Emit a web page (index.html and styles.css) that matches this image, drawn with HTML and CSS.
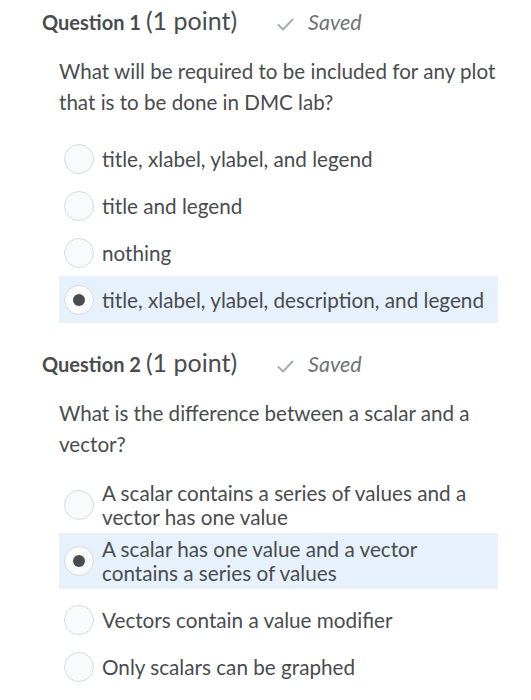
FILE: index.html
```html
<!DOCTYPE html>
<html>
<head>
<meta charset="utf-8">
<link rel="stylesheet" href="styles.css">
</head>
<body>
<div class="quiz">
  <section class="question q1">
    <h2 class="q-head">
      <span class="q-num">Question 1</span>
      <span class="q-pts">(1 point)</span>
      <span class="saved">
        <svg class="check" width="17" height="13" viewBox="0 0 17 13"><path d="M1.5 7 L6 11.5 L15.5 1.5" fill="none" stroke="#a7adb3" stroke-width="2" stroke-linecap="round" stroke-linejoin="round"/></svg>
        <em>Saved</em>
      </span>
    </h2>
    <p class="q-text">What will be required to be included for any plot that is to be done in DMC lab?</p>
    <ul class="options">
      <li class="option"><span class="radio"></span><span class="opt-text">title, xlabel, ylabel, and legend</span></li>
      <li class="option"><span class="radio"></span><span class="opt-text">title and legend</span></li>
      <li class="option"><span class="radio"></span><span class="opt-text">nothing</span></li>
      <li class="option selected"><span class="radio"></span><span class="opt-text">title, xlabel, ylabel, description, and legend</span></li>
    </ul>
  </section>
  <section class="question q2">
    <h2 class="q-head">
      <span class="q-num">Question 2</span>
      <span class="q-pts">(1 point)</span>
      <span class="saved">
        <svg class="check" width="17" height="13" viewBox="0 0 17 13"><path d="M1.5 7 L6 11.5 L15.5 1.5" fill="none" stroke="#a7adb3" stroke-width="2" stroke-linecap="round" stroke-linejoin="round"/></svg>
        <em>Saved</em>
      </span>
    </h2>
    <p class="q-text">What is the difference between a scalar and a vector?</p>
    <ul class="options">
      <li class="option"><span class="radio"></span><span class="opt-text">A scalar contains a series of values and a vector has one value</span></li>
      <li class="option selected"><span class="radio"></span><span class="opt-text">A scalar has one value and a vector contains a series of values</span></li>
      <li class="option spaced"><span class="radio"></span><span class="opt-text">Vectors contain a value modifier</span></li>
      <li class="option"><span class="radio"></span><span class="opt-text">Only scalars can be graphed</span></li>
    </ul>
  </section>
</div>
</body>
</html>
```
FILE: styles.css
```css
html, body {
  margin: 0;
  padding: 0;
  background: #ffffff;
}
body {
  font-family: Lato, "Open Sans", sans-serif;
  color: #494c4e;
}
.quiz {
  padding: 5px 0 0 42px;
  width: 457px;
}
.question {
  display: flex;
  flex-direction: column;
}
.q2 {
  margin-top: 24px;
}
.q-head {
  margin: 0;
  display: flex;
  align-items: baseline;
  line-height: 30px;
  font-weight: normal;
}
.q-num {
  font-size: 20px;
  font-weight: 700;
}
.q-pts {
  font-size: 25px;
  margin-left: 5px;
}
.saved {
  margin-left: 40px;
  display: flex;
  align-items: baseline;
  gap: 14px;
  color: #6e7376;
}
.check {
  position: relative;
  top: 1px;
}
.saved em {
  font-size: 21.5px;
  font-style: italic;
}
.q-text {
  margin: 19px 0 0 17px;
  font-size: 20.6px;
  line-height: 31px;
  width: 445px;
}
.options {
  list-style: none;
  margin: 17px 0 0 17px;
  padding: 0;
  width: 439px;
}
.option {
  display: flex;
  align-items: center;
  gap: 8px;
  min-height: 39px;
  padding: 4px 8px 4px 5px;
}
.option.spaced {
  margin-top: 7px;
}
.option.selected {
  background: #e6f1fc;
}
.radio {
  flex: none;
  width: 28px;
  height: 28px;
  border-radius: 50%;
  border: 1px solid #d6dbe2;
  background: #f9fafb;
  display: flex;
  align-items: center;
  justify-content: center;
}
.selected .radio::after {
  content: "";
  width: 12px;
  height: 12px;
  border-radius: 50%;
  background: #494c4e;
}
.opt-text {
  font-size: 20.7px;
  line-height: 24px;
}
```
